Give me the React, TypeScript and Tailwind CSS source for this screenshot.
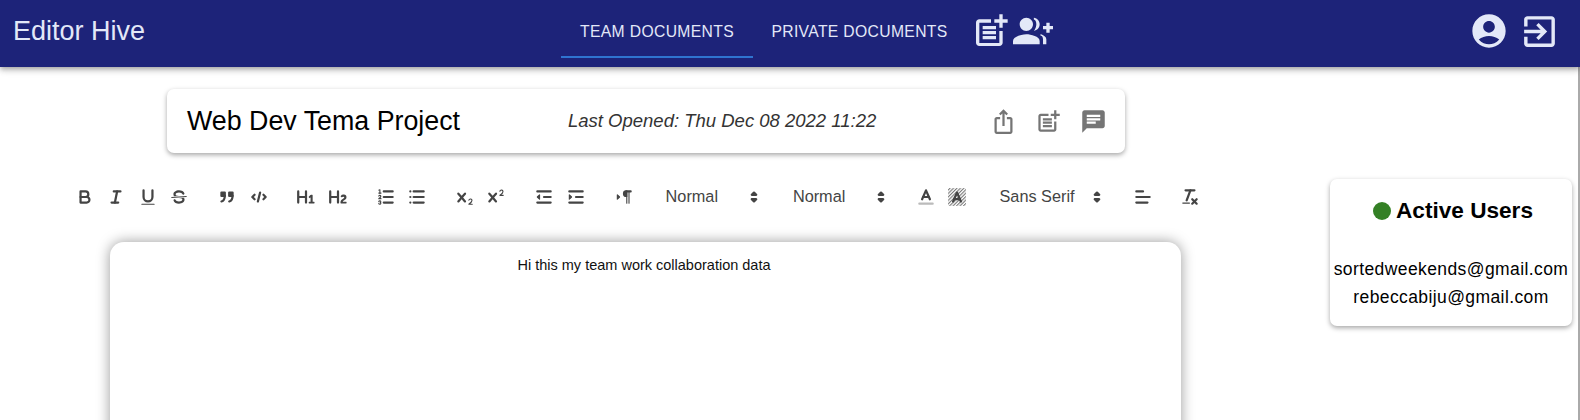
import type { ReactNode } from 'react';

const navIcon = {
  postAdd:
    'M17 19.22H5V7h7V5H5c-1.1 0-2 .9-2 2v12c0 1.1.9 2 2 2h12c1.1 0 2-.9 2-2v-7h-2v7.22zM19 2h-2v3h-3c.01.01 0 2 0 2h3v2.99c.01.01 2 0 2 0V7h3V5h-3V2zM7 9h8v2H7zM7 12v2h8v-2h-3zM7 15h8v2H7z',
  groupAdd:
    'M22 9V7h-2v2h-2v2h2v2h2v-2h2V9zM8 12c2.21 0 4-1.79 4-4s-1.79-4-4-4-4 1.79-4 4 1.79 4 4 4zm0 2c-2.67 0-8 1.34-8 4v2h16v-2c0-2.66-5.33-4-8-4zm4.51-8.95C13.43 5.11 14 6.49 14 8s-.57 2.89-1.49 3.95C14.47 11.7 16 10.04 16 8s-1.53-3.7-3.49-3.95zm4.02 9.78C17.42 14.66 18 15.7 18 17v3h2v-3c0-1.45-1.59-2.51-3.47-3.17z',
  account:
    'M12 2C6.48 2 2 6.48 2 12s4.48 10 10 10 10-4.48 10-10S17.52 2 12 2zm0 4c1.93 0 3.5 1.57 3.5 3.5S13.93 13 12 13s-3.5-1.57-3.5-3.5S10.07 6 12 6zm0 14c-2.03 0-4.43-.82-6.14-2.88C7.55 15.8 9.68 15 12 15s4.45.8 6.14 2.12C16.43 19.18 14.03 20 12 20z',
  exit:
    'M10.09 15.59L11.5 17l5-5-5-5-1.41 1.41L12.67 11H3v2h9.67l-2.58 2.59zM19 3H5c-1.11 0-2 .9-2 2v4h2V5h14v14H5v-4H3v4c0 1.1.89 2 2 2h14c1.1 0 2-.9 2-2V5c0-1.1-.9-2-2-2z',
  share:
    'M16 5l-1.42 1.42-1.59-1.59V16h-1.98V4.83L9.42 6.42 8 5l4-4 4 4zm4 5v11c0 1.1-.9 2-2 2H6c-1.11 0-2-.9-2-2V10c0-1.11.89-2 2-2h3v2H6v11h12V10h-3V8h3c1.1 0 2 .89 2 2z',
  chat: 'M20 2H4c-1.1 0-1.99.9-1.99 2L2 22l4-4h14c1.1 0 2-.9 2-2V4c0-1.1-.9-2-2-2zM6 9h12v2H6V9zm8 5H6v-2h8v2zm4-6H6V6h12v2z',
};

function MuiIcon({ d, className }: { d: string; className: string }) {
  return (
    <svg viewBox="0 0 24 24" fill="currentColor" className={className}>
      <path d={d} />
    </svg>
  );
}

// quill toolbar glyphs, all on the 18 unit grid
function Glyph({ children }: { children: ReactNode }) {
  return (
    <svg viewBox="0 0 18 18" fill="none" stroke="#444" strokeWidth="2" strokeLinecap="round" strokeLinejoin="round" className="w-[20px] h-[20px]">
      {children}
    </svg>
  );
}

const X_MARK =
  'M9.65,5.241a1,1,0,0,0-1.409.108L6,7.964,3.759,5.349A1,1,0,0,0,2.24,6.651L4.684,9.5,2.24,12.35a1,1,0,0,0,1.519,1.3L6,11.036l2.241,2.614a1,1,0,0,0,1.519-1.3L7.316,9.5,9.76,6.651A1,1,0,0,0,9.65,5.241Z';

const glyphs: Record<string, ReactNode> = {
  bold: (
    <>
      <path d="M5,4H9.5A2.5,2.5,0,0,1,12,6.5v0A2.5,2.5,0,0,1,9.5,9H5V4Z" />
      <path d="M5,9h5.5A2.5,2.5,0,0,1,13,11.5v0A2.5,2.5,0,0,1,10.5,14H5V9Z" />
    </>
  ),
  italic: (
    <>
      <line x1="7" x2="13" y1="4" y2="4" />
      <line x1="5" x2="11" y1="14" y2="14" />
      <line x1="8" x2="10" y1="14" y2="4" />
    </>
  ),
  underline: (
    <>
      <path d="M5,3V9a4.012,4.012,0,0,0,4,4H9a4.012,4.012,0,0,0,4-4V3" />
      <rect x="3" y="15" width="12" height="1" rx=".5" fill="#444" stroke="none" />
    </>
  ),
  strike: (
    <>
      <line x1="15.5" x2="2.5" y1="8.5" y2="9.5" strokeWidth="1" />
      <path fill="#444" stroke="none" d="M9.007,8C6.542,7.791,6,7.519,6,6.5,6,5.792,7.283,5,9,5c1.571,0,2.765.679,2.969,1.309a1,1,0,0,0,1.9-.617C13.356,4.106,11.354,3,9,3,6.2,3,4,4.538,4,6.5a3.2,3.2,0,0,0,.5,1.843Z" />
      <path fill="#444" stroke="none" d="M8.984,10C11.457,10.208,12,10.479,12,11.5c0,.708-1.283,1.5-3,1.5-1.571,0-2.765-.679-2.969-1.309a1,1,0,1,0-1.9.617C4.644,13.894,6.646,15,9,15c2.8,0,5-1.538,5-3.5a3.2,3.2,0,0,0-.5-1.843Z" />
    </>
  ),
  quote: (
    <>
      <rect x="4" y="5" width="3" height="3" fill="#444" />
      <rect x="11" y="5" width="3" height="3" fill="#444" />
      <path d="M7,8c0,4.031-3,5-3,5" />
      <path d="M14,8c0,4.031-3,5-3,5" />
    </>
  ),
  code: (
    <>
      <polyline points="5 7 3 9 5 11" />
      <polyline points="13 7 15 9 13 11" />
      <line x1="10" x2="8" y1="5" y2="13" />
    </>
  ),
  h1: (
    <path fill="#444" stroke="none" d="M10,4V14a1,1,0,0,1-2,0V10H3v4a1,1,0,0,1-2,0V4A1,1,0,0,1,3,4V8H8V4a1,1,0,0,1,2,0Zm6.06787,9.209H14.98975V7.59863a.54085.54085,0,0,0-.605-.60547h-.62744a1.01119,1.01119,0,0,0-.748.29688L11.645,8.56641a.5435.5435,0,0,0-.022.8584l.28613.30762a.53861.53861,0,0,0,.84717.0332l.09912-.08789a1.2137,1.2137,0,0,0,.2417-.35254h.02246s-.01123.30859-.01123.60547V13.209H12.041a.54085.54085,0,0,0-.605.60547v.43945a.54085.54085,0,0,0,.605.60547h4.02686a.54085.54085,0,0,0,.605-.60547v-.43945A.54085.54085,0,0,0,16.06787,13.209Z" />
  ),
  h2: (
    <path fill="#444" stroke="none" d="M16.73975,13.81445v.43945a.54085.54085,0,0,1-.605.60547H11.855a.58392.58392,0,0,1-.64893-.60547V14.0127c0-2.90527,3.39941-3.42187,3.39941-4.55469a.77675.77675,0,0,0-.84717-.78125,1.17684,1.17684,0,0,0-.83594.38477c-.2749.26367-.561.374-.85791.13184l-.4292-.34082c-.30811-.24219-.38525-.51758-.1543-.81445a2.97155,2.97155,0,0,1,2.45361-1.17676,2.45393,2.45393,0,0,1,2.68408,2.40918c0,2.45312-3.1792,2.92676-3.27832,3.93848h2.79443A.54085.54085,0,0,1,16.73975,13.81445ZM9,3A.99974.99974,0,0,0,8,4V8H3V4A1,1,0,0,0,1,4V14a1,1,0,0,0,2,0V10H8v4a1,1,0,0,0,2,0V4A.99974.99974,0,0,0,9,3Z" />
  ),
  ol: (
    <>
      <line x1="7" x2="15" y1="4" y2="4" />
      <line x1="7" x2="15" y1="9" y2="9" />
      <line x1="7" x2="15" y1="14" y2="14" />
      <line x1="2.5" x2="4.5" y1="5.5" y2="5.5" strokeWidth="1" />
      <path fill="#444" stroke="none" d="M3.5,6A0.5,0.5,0,0,1,3,5.5V3.085l-0.276.138A0.5,0.5,0,0,1,2.053,3c-0.124-.247-0.023-0.324.224-0.447l1-.5A0.5,0.5,0,0,1,4,2.5v3A0.5,0.5,0,0,1,3.5,6Z" />
      <path strokeWidth="1" d="M4.5,10.5h-2c0-.234,1.85-1.076,1.85-2.234A0.959,0.959,0,0,0,2.5,8.156" />
      <path strokeWidth="1" d="M2.5,14.846a0.959,0.959,0,0,0,1.85-.109A0.7,0.7,0,0,0,3.75,14a0.688,0.688,0,0,0,.6-0.736,0.959,0.959,0,0,0-1.85-.109" />
    </>
  ),
  ul: (
    <>
      <line x1="6" x2="15" y1="4" y2="4" />
      <line x1="6" x2="15" y1="9" y2="9" />
      <line x1="6" x2="15" y1="14" y2="14" />
      <line x1="3" x2="3" y1="4" y2="4" />
      <line x1="3" x2="3" y1="9" y2="9" />
      <line x1="3" x2="3" y1="14" y2="14" />
    </>
  ),
  sub: (
    <>
      <path fill="#444" stroke="none" d="M15.5,15H13.861a3.858,3.858,0,0,0,1.914-2.975,1.8,1.8,0,0,0-1.6-1.751A1.921,1.921,0,0,0,12.021,11.7a0.50013,0.50013,0,1,0,.957.291h0a0.914,0.914,0,0,1,1.053-.725,0.81,0.81,0,0,1,.744.762c0,1.076-1.16971,1.86982-1.93971,2.43082A1.45639,1.45639,0,0,0,12,15.5a0.5,0.5,0,0,0,.5.5h3A0.5,0.5,0,0,0,15.5,15Z" />
      <path fill="#444" stroke="none" d={X_MARK} />
    </>
  ),
  sup: (
    <>
      <path fill="#444" stroke="none" d="M15.5,7H13.861a4.015,4.015,0,0,0,1.914-2.975,1.8,1.8,0,0,0-1.6-1.751A1.922,1.922,0,0,0,12.021,3.7a0.5,0.5,0,1,0,.957.291,0.917,0.917,0,0,1,1.053-.725,0.81,0.81,0,0,1,.744.762c0,1.077-1.164,1.925-1.934,2.486A1.423,1.423,0,0,0,12,7.5a0.5,0.5,0,0,0,.5.5h3A0.5,0.5,0,0,0,15.5,7Z" />
      <path fill="#444" stroke="none" d={X_MARK} />
    </>
  ),
  outdent: (
    <>
      <line x1="3" x2="15" y1="14" y2="14" />
      <line x1="3" x2="15" y1="4" y2="4" />
      <line x1="9" x2="15" y1="9" y2="9" />
      <polygon fill="#444" strokeWidth="1" points="5 7 5 11 3 9 5 7" />
    </>
  ),
  indent: (
    <>
      <line x1="3" x2="15" y1="14" y2="14" />
      <line x1="3" x2="15" y1="4" y2="4" />
      <line x1="9" x2="15" y1="9" y2="9" />
      <polygon fill="#444" strokeWidth="1" points="3 7 3 11 5 9 3 7" />
    </>
  ),
  direction: (
    <>
      <polygon fill="#444" strokeWidth="1" points="3 11 5 9 3 7 3 11" />
      <line x1="15" x2="11" y1="4" y2="4" />
      <path fill="#444" stroke="none" d="M11,3a3,3,0,0,0,0,6h1V3H11Z" />
      <rect x="11" y="4" width="1" height="11" fill="#444" stroke="none" />
      <rect x="13" y="4" width="1" height="11" fill="#444" stroke="none" />
    </>
  ),
  color: (
    <>
      <line x1="3" x2="15" y1="15" y2="15" stroke="#bbb" />
      <polyline points="5.5 11 9 3 12.5 11" />
      <line x1="11.63" x2="6.38" y1="9" y2="9" />
    </>
  ),
  background: (
    <>
      <pattern id="hatch" width="2.2" height="2.2" patternUnits="userSpaceOnUse" patternTransform="rotate(45)">
        <rect width="1" height="2.2" fill="#777" stroke="none" />
      </pattern>
      <rect x="1" y="1" width="16" height="16" fill="url(#hatch)" stroke="none" />
      <polyline points="5.5 13 9 5 12.5 13" />
      <line x1="11.63" x2="6.38" y1="11" y2="11" />
    </>
  ),
  align: (
    <>
      <line x1="3" x2="15" y1="9" y2="9" />
      <line x1="3" x2="13" y1="14" y2="14" />
      <line x1="3" x2="9" y1="4" y2="4" />
    </>
  ),
  clean: (
    <>
      <line x1="5" x2="13" y1="3" y2="3" />
      <line x1="6" x2="9.35" y1="12" y2="3" />
      <line x1="11" x2="15" y1="11" y2="15" />
      <line x1="15" x2="11" y1="11" y2="15" />
      <rect x="2" y="14" width="7" height="1" rx=".5" fill="#444" stroke="none" />
    </>
  ),
};

function ToolButton({ name }: { name: string }) {
  return (
    <span className="w-[31.5px] h-[27px] flex items-center justify-center">
      <Glyph>{glyphs[name]}</Glyph>
    </span>
  );
}

function Picker({ label, width }: { label: string; width: string }) {
  return (
    <span className={`${width} mr-[16.3px] h-[27px] pl-[10px] pr-[3px] flex items-center justify-between text-[16.3px] text-[#444]`}>
      {label}
      <svg viewBox="0 0 18 18" fill="#444" stroke="#444" strokeWidth="2" strokeLinejoin="round" className="w-[20px] h-[20px]">
        <polygon points="7 11 9 13 11 11 7 11" />
        <polygon points="7 7 9 5 11 7 7 7" />
      </svg>
    </span>
  );
}

const toolGroups = [
  ['bold', 'italic', 'underline', 'strike'],
  ['quote', 'code'],
  ['h1', 'h2'],
  ['ol', 'ul'],
  ['sub', 'sup'],
  ['outdent', 'indent'],
  ['direction'],
];

export default function App() {
  return (
    <div className="h-[420px] overflow-hidden bg-white font-['Liberation_Sans',sans-serif] text-black">
      {/* App bar */}
      <header className="relative z-10 h-[67px] bg-[#1d2379] text-[#e3e8f8] flex items-start pl-[13px] pr-[20px] shadow-[0_2px_4px_-1px_rgba(0,0,0,0.2),0_4px_5px_0_rgba(0,0,0,0.14),0_1px_10px_0_rgba(0,0,0,0.12)]">
        <div className="w-[548px] h-[63px] flex items-center text-[27px]">Editor Hive</div>
        <nav className="flex-1 flex items-center h-[58px]">
          <a className="w-[192px] h-full flex items-center justify-center pt-[8px] text-[15.7px] tracking-[0.35px] border-b-[2px] border-[#2f74d0]">TEAM DOCUMENTS</a>
          <a className="w-[192px] ml-[10.5px] flex items-center justify-center pt-[6px] text-[15.7px] tracking-[0.35px] whitespace-nowrap">PRIVATE DOCUMENTS</a>
          <MuiIcon d={navIcon.postAdd} className="w-[40px] h-[40px] ml-[15px] mt-[4px]" />
          <MuiIcon d={navIcon.groupAdd} className="w-[40px] h-[40px] ml-[2.5px] mt-[4px]" />
        </nav>
        <div className="flex items-center gap-[10px] h-[62px]">
          <MuiIcon d={navIcon.account} className="w-[40px] h-[40px]" />
          <MuiIcon d={navIcon.exit} className="w-[41px] h-[41px]" />
        </div>
      </header>

      <main className="flex h-[353px] border-r-[2px] border-[#aaa]">
        <div className="w-[1330px] shrink-0 pl-[69px]">
          {/* Document title bar */}
          <section className="ml-[98px] mt-[22px] w-[958px] h-[64px] rounded-[7px] bg-white shadow-[0_2px_5px_rgba(0,0,0,0.35)] flex items-center pl-[20px] pr-[18px]">
            <h1 className="w-[381px] text-[26.8px]">Web Dev Tema Project</h1>
            <p className="text-[18.5px] italic text-[#333] whitespace-nowrap">Last Opened: Thu Dec 08 2022 11:22</p>
            <div className="ml-auto flex items-center gap-[18px] text-[#757575]">
              <MuiIcon d={navIcon.share} className="w-[27px] h-[27px]" />
              <MuiIcon d={navIcon.postAdd} className="w-[27px] h-[27px]" />
              <MuiIcon d={navIcon.chat} className="w-[27px] h-[27px]" />
            </div>
          </section>

          {/* Quill toolbar */}
          <div className="mt-[30px] flex items-center">
            {toolGroups.map((group) => (
              <div key={group[0]} className="flex mr-[16.3px]">
                {group.map((name) => (
                  <ToolButton key={name} name={name} />
                ))}
              </div>
            ))}
            <Picker label="Normal" width="w-[111px]" />
            <Picker label="Normal" width="w-[111px]" />
            <div className="flex mr-[16.3px]">
              <ToolButton name="color" />
              <ToolButton name="background" />
            </div>
            <Picker label="Sans Serif" width="w-[121px]" />
            <div className="flex">
              <ToolButton name="align" />
              <span className="w-[16px]" />
              <ToolButton name="clean" />
            </div>
          </div>

          {/* Editor page */}
          <div className="ml-[41px] mt-[32px] w-[1071px] h-[300px] rounded-[14px] bg-white shadow-[0_0_14px_rgba(0,0,0,0.4)] pt-[13px] pr-[3px] text-center text-[14.5px] text-[#111]">
            Hi this my team work collaboration data
          </div>
        </div>

        {/* Active users */}
        <aside className="mt-[112px] w-[242px] h-[147px] rounded-[7px] bg-white shadow-[0_2px_5px_rgba(0,0,0,0.35)] text-center">
          <h2 className="mt-[17px] h-[30px] pl-[4px] flex items-center justify-center gap-[5px] text-[22.6px] font-bold">
            <span className="w-[18px] h-[18px] rounded-full bg-[#348025]" />
            Active Users
          </h2>
          <p className="mt-[29px] text-[17.5px] leading-[28px] tracking-[0.4px] whitespace-nowrap">sortedweekends@gmail.com</p>
          <p className="text-[17.5px] leading-[28px] tracking-[0.4px]">rebeccabiju@gmail.com</p>
        </aside>
      </main>
    </div>
  );
}
